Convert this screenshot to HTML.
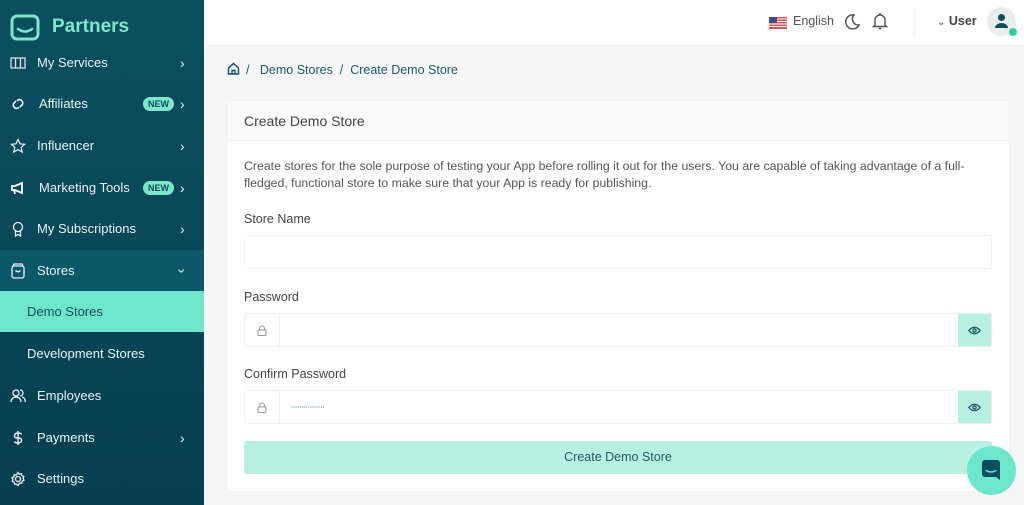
<!DOCTYPE html>
<html><head><meta charset="utf-8"><style>
*{box-sizing:border-box;margin:0;padding:0}
body{width:1024px;height:505px;overflow:hidden;font-family:"Liberation Sans",sans-serif;background:#f6f6f6;position:relative;color:#333}
.sb{position:absolute;left:0;top:0;width:204px;height:505px;background:linear-gradient(#0b4f5e,#063f50);color:#e8f3f3;overflow:hidden}
.logo{position:absolute;left:0;top:0;width:204px;height:57px;padding:14px 0 0 10px;background:#0b4f5e;display:flex;align-items:flex-start;gap:12px;color:#7ee6cc;font-size:19px;font-weight:bold;z-index:2}
.it{position:absolute;left:0;width:204px;height:41px;display:flex;align-items:center;font-size:13px}
.it svg{position:absolute;left:10px}
.it .t{position:absolute;left:37px}
.it .ch{position:absolute;left:180px;font-size:14px;color:#cfe}
.new{position:absolute;left:143px;background:#7ee6cc;color:#0b4f5e;font-size:9px;font-weight:bold;border-radius:8px;padding:2px 5px}
.hd{position:absolute;left:204px;top:0;right:0;height:46px;background:#fff;border-bottom:1px solid #eee}
.card{position:absolute;left:227px;top:101px;width:782px;height:390px;background:#fff;border-radius:4px;box-shadow:0 0 2px rgba(0,0,0,.06)}
.ch2{height:40px;background:#fafafa;border-bottom:1px solid #f0f0f0;padding:12px 17px;font-size:14px;color:#444}
.lbl{position:absolute;left:17px;font-size:12.5px;color:#444}
.inp{position:absolute;left:17px;width:748px;height:34px;border:1px solid #f0f0f0;border-radius:3px;background:#fff}
.lock{position:absolute;left:0;top:0;width:35px;height:32px;border-right:1px solid #f0f0f0;display:flex;align-items:center;justify-content:center}
.eye{position:absolute;right:0;top:0;width:33px;height:32px;background:#b8f1e2;display:flex;align-items:center;justify-content:center}
</style></head><body>
<div class="sb">
<div class="logo"><svg width="30" height="27" viewBox="0 0 30 27"><rect x="2" y="2" width="26" height="23" rx="5" fill="none" stroke="#7ee6cc" stroke-width="3"/><path d="M8 15q7 5 14 0" fill="none" stroke="#7ee6cc" stroke-width="2.5" stroke-linecap="round"/></svg><span style="margin-top:2px">Partners</span></div>
<div class="it" style="top:42px"><svg width="16" height="12" viewBox="0 0 16 12"><rect x="1" y="1" width="14" height="10" fill="none" stroke="#dde" stroke-width="1.3"/><path d="M5.5 1v10M10.5 1v10" stroke="#dde" stroke-width="1.3"/></svg><span class="t">My Services</span><span class="ch">›</span></div>
<div class="it" style="top:83px"><svg width="16" height="16" viewBox="0 0 16 16" fill="none" stroke="#eef" stroke-width="1.6"><path d="M7 5a3 3 0 0 1 4-1l1 1a3 3 0 0 1 0 4l-2 2M9 11a3 3 0 0 1-4 1l-1-1a3 3 0 0 1 0-4l2-2"/></svg><span class="t" style="left:39px">Affiliates</span><span class="new">NEW</span><span class="ch">›</span></div>
<div class="it" style="top:125px"><svg width="16" height="16" viewBox="0 0 16 16"><path d="M8 1.5l2 4.3 4.6.5-3.4 3.1 1 4.6L8 11.6 3.8 14l1-4.6L1.4 6.3 6 5.8z" fill="none" stroke="#eef" stroke-width="1.2"/></svg><span class="t">Influencer</span><span class="ch">›</span></div>
<div class="it" style="top:167px"><svg width="16" height="16" viewBox="0 0 16 16"><path d="M2 6h3l7-3v10l-7-3H2zM4 10l1 4" fill="none" stroke="#fff" stroke-width="1.8"/></svg><span class="t" style="left:39px">Marketing Tools</span><span class="new">NEW</span><span class="ch">›</span></div>
<div class="it" style="top:208px"><svg width="16" height="16" viewBox="0 0 16 16" fill="none" stroke="#eef" stroke-width="1.3"><circle cx="8" cy="6" r="4.5"/><path d="M5.5 10v5l2.5-1.5 2.5 1.5v-5"/></svg><span class="t">My Subscriptions</span><span class="ch">›</span></div>
<div class="it" style="top:250px;background:#0a5868"><svg width="16" height="16" viewBox="0 0 16 16" fill="none" stroke="#eef" stroke-width="1.3"><rect x="2" y="3" width="12" height="12" rx="2"/><path d="M3 3l1-2h8l1 2M5.5 7.5q2.5 2.5 5 0"/></svg><span class="t">Stores</span><span class="ch" style="transform:rotate(90deg)">›</span></div>
<div class="it" style="top:291px;background:#6ee6cc;color:#0b4f5e"><span class="t" style="left:27px">Demo Stores</span></div>
<div class="it" style="top:333px"><span class="t" style="left:27px">Development Stores</span></div>
<div class="it" style="top:375px"><svg width="16" height="16" viewBox="0 0 16 16" fill="none" stroke="#eef" stroke-width="1.3"><circle cx="6" cy="5" r="3"/><path d="M1 14a5 5 0 0 1 10 0M10 2a3 3 0 0 1 0 6M12 9a4 4 0 0 1 3 5"/></svg><span class="t">Employees</span></div>
<div class="it" style="top:417px"><svg width="16" height="16" viewBox="0 0 16 16" fill="none" stroke="#eef" stroke-width="1.4"><path d="M8 1v14M11.5 4.5Q11 3 8 3T4.5 5.5 8 8t3.5 2.5T8 13 4.5 11.5"/></svg><span class="t">Payments</span><span class="ch">›</span></div>
<div class="it" style="top:458px"><svg width="16" height="16" viewBox="0 0 16 16" fill="none" stroke="#eef" stroke-width="1.3"><circle cx="8" cy="8" r="2.5"/><path d="M8 1.5l1.3 1.6 2-.4.6 2 1.9.8-.7 1.9.9 1.8-1.8.9-.4 2-2-.1L8 14.5l-1.4-1.5-2 .2-.5-2-1.8-.8.6-1.9-.9-1.8 1.9-.9.3-2 2 .3z"/></svg><span class="t">Settings</span></div>
</div>
<div class="hd">
<svg style="position:absolute;left:565px;top:17px" width="18" height="12" viewBox="0 0 18 12"><rect width="18" height="12" fill="#d55"/><path d="M0 2h18M0 4.5h18M0 7h18M0 9.5h18" stroke="#fff" stroke-width="1"/><rect width="8" height="6" fill="#3a4f8a"/></svg>
<span style="position:absolute;left:589px;top:14px;font-size:12.5px;color:#555">English</span>
<svg style="position:absolute;left:640px;top:13px" width="16" height="18" viewBox="0 0 16 18"><path d="M10 2a7 7 0 1 0 5 10A6 6 0 0 1 10 2z" fill="none" stroke="#555" stroke-width="1.5"/></svg>
<svg style="position:absolute;left:668px;top:12px" width="16" height="18" viewBox="0 0 16 18" fill="none" stroke="#555" stroke-width="1.4"><path d="M3 13V8a5 5 0 0 1 10 0v5l1.5 1.5h-13zM6.5 16.5h3M8 1v2"/></svg>
<div style="position:absolute;left:710px;top:8px;width:1px;height:28px;background:#eee"></div>
<span style="position:absolute;left:733px;top:14px;font-size:12.5px;color:#444;font-weight:bold"><span style="font-weight:normal;font-size:10px">⌄</span> User</span>
<div style="position:absolute;left:783px;top:7px;width:29px;height:29px;border-radius:50%;background:#e8eeee"><svg style="position:absolute;left:7px;top:6px" width="15" height="16" viewBox="0 0 15 16"><circle cx="7.5" cy="4.5" r="3.5" fill="#0b4f5e"/><path d="M1 15a6.5 5 0 0 1 13 0z" fill="#0b4f5e"/></svg><div style="position:absolute;left:22px;top:21px;width:8px;height:8px;border-radius:50%;background:#2bd0a5"></div></div>
</div>
<svg style="position:absolute;left:227px;top:62px" width="13" height="13" viewBox="0 0 13 13" fill="none" stroke="#0b5060" stroke-width="1.4"><path d="M1.5 6L6.5 1.5 11.5 6V12h-10zM5 12V8.5h3V12"/></svg>
<span style="position:absolute;left:246px;top:63px;font-size:12.5px;color:#1b5a68">/&nbsp;&nbsp; Demo Stores &nbsp;/&nbsp; Create Demo Store</span>
<div class="card">
<div class="ch2">Create Demo Store</div>
<div style="position:absolute;left:17px;top:57px;width:752px;font-size:12.3px;line-height:17px;color:#555">Create stores for the sole purpose of testing your App before rolling it out for the users. You are capable of taking advantage of a full-fledged, functional store to make sure that your App is ready for publishing.</div>
<div class="lbl" style="top:111px">Store Name</div>
<div class="inp" style="top:134px"></div>
<div class="lbl" style="top:189px">Password</div>
<div class="inp" style="top:212px"><div class="lock"><svg width="10" height="11" viewBox="0 0 10 11" fill="none" stroke="#999" stroke-width="1.1"><rect x="1" y="5" width="8" height="5.5" rx="1"/><path d="M2.5 5V3.5a2.5 2.5 0 0 1 5 0V5"/></svg></div><div class="eye"><svg width="13" height="9" viewBox="0 0 13 9" fill="none" stroke="#175563" stroke-width="1.3"><path d="M.8 4.5Q6.5-2 12.2 4.5 6.5 11 .8 4.5z"/><circle cx="6.5" cy="4.5" r="1.6"/></svg></div></div>
<div class="lbl" style="top:266px">Confirm Password</div>
<div class="inp" style="top:289px"><div class="lock"><svg width="10" height="11" viewBox="0 0 10 11" fill="none" stroke="#999" stroke-width="1.1"><rect x="1" y="5" width="8" height="5.5" rx="1"/><path d="M2.5 5V3.5a2.5 2.5 0 0 1 5 0V5"/></svg></div><svg style="position:absolute;left:46px;top:15px" width="34" height="2"><line x1="0.5" y1="1" x2="34" y2="1" stroke="#5a8a9a" stroke-width="1" stroke-dasharray="1 1.1"/></svg><div class="eye"><svg width="13" height="9" viewBox="0 0 13 9" fill="none" stroke="#175563" stroke-width="1.3"><path d="M.8 4.5Q6.5-2 12.2 4.5 6.5 11 .8 4.5z"/><circle cx="6.5" cy="4.5" r="1.6"/></svg></div></div>
<div style="position:absolute;left:17px;top:340px;width:748px;height:33px;background:#b8f1e2;border-radius:3px;text-align:center;line-height:33px;font-size:12.5px;color:#1e5b66">Create Demo Store</div>
</div>
<div style="position:absolute;left:967px;top:446px;width:49px;height:49px;border-radius:50%;background:#6ee6cc"><svg style="position:absolute;left:15px;top:14px" width="18" height="20" viewBox="0 0 18 20"><path d="M3 0h12a3 3 0 0 1 3 3v17l-4-3H3a3 3 0 0 1-3-3V3a3 3 0 0 1 3-3z" fill="#0b4f5e"/><path d="M4 10.5q5 3 10 0" fill="none" stroke="#6ee6cc" stroke-width="1.4" stroke-linecap="round"/></svg></div>
</body></html>
